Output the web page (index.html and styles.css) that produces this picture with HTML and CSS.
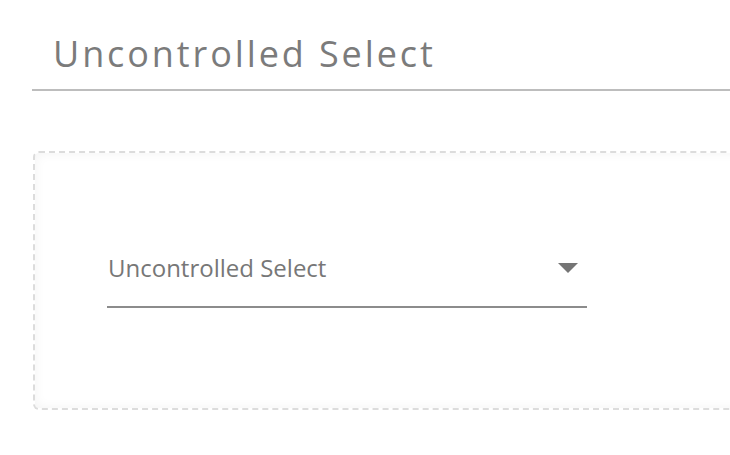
FILE: index.html
```html
<!DOCTYPE html>
<html>
<head>
<meta charset="utf-8">
<link rel="stylesheet" href="styles.css">
</head>
<body>
<div class="page">
  <h1 class="title">Uncontrolled Select</h1>
  <div class="card">
    <div class="select">
      <span class="select-label">Uncontrolled Select</span>
      <svg class="arrow" width="20" height="10" viewBox="0 0 20 10"><polygon points="0,0 20,0 10,10" fill="#757575"/></svg>
    </div>
  </div>
</div>
</body>
</html>
```
FILE: styles.css
```css
html, body {
  margin: 0;
  padding: 0;
  background: #fff;
}
body {
  width: 730px;
  height: 455px;
  overflow: hidden;
}
.page {
  padding-left: 32px;
  overflow: hidden;
}
.title {
  margin: 0;
  padding: 32px 0 13px 21px;
  font-family: "Open Sans", sans-serif;
  font-weight: 400;
  font-size: 36px;
  line-height: 44px;
  letter-spacing: 2.9px;
  color: #7b7b7b;
  border-bottom: 2px solid #bdbdbd;
}
.card {
  margin-top: 60px;
  margin-left: 1px;
  margin-right: -30px;
  height: 259px;
  border: 2px dashed #dcdcdc;
  border-radius: 6px;
  box-shadow: inset 0 0 12px rgba(0,0,0,0.05);
  box-sizing: border-box;
  padding: 97px 0 0 72px;
}
.select {
  width: 480px;
  height: 58px;
  box-sizing: border-box;
  border-bottom: 2px solid #8c8c8c;
  display: flex;
  align-items: flex-start;
  justify-content: space-between;
  padding: 3px 9px 0 1px;
}
.select-label {
  font-family: "Open Sans", sans-serif;
  font-size: 24px;
  line-height: 30px;
  color: #777;
}
.arrow {
  margin-top: 10px;
}
```
